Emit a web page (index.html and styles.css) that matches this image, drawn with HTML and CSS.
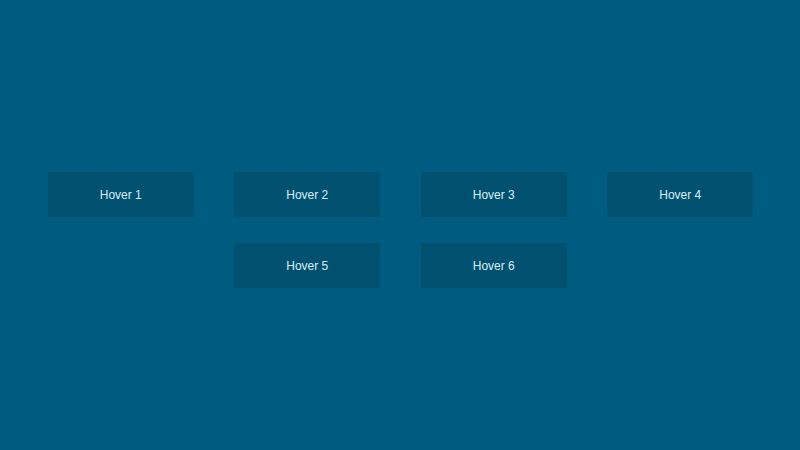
FILE: index.html
```html
<!DOCTYPE html>
<html lang="en">

<head>
    <meta charset="UTF-8">
    <meta name="viewport" content="width=device-width, initial-scale=1.0">
    <title>Hover Buttons</title>
    <link rel="stylesheet" href="styles.css">
</head>

<body>

    <div class="container">
        <div class="btn">Hover 1</div>
        <div class="btn">Hover 2</div>
        <div class="btn">Hover 3</div>
        <div class="btn">Hover 4</div>
        <div class="btn">Hover 5</div>
        <div class="btn">Hover 6</div>
    </div>

</body>

</html>
```

FILE: styles.css
```css
body {
    font-family: "Liberation Sans", Arial, sans-serif;
    margin: 0;
    background-color: #005b80;
    height: 100vh;
}

.container {
    display: flex;
    flex-wrap: wrap;
    justify-content: center;
    gap: 26px 40.5px;
    padding: 172px 46px 0 47px;
}

.btn {
    width: 146px;
    height: 45px;
    display: flex;
    justify-content: center;
    align-items: center;
    background-color: #00506f;
    color: #dcefF8;
    font-size: 12px;
    cursor: pointer;
}
```
